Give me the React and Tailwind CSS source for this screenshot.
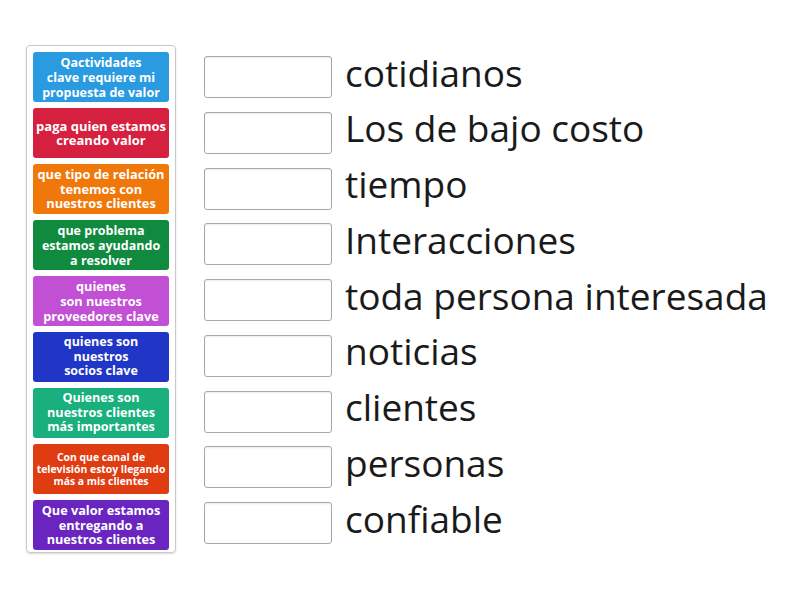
import React from 'react';

const cards = [
  { lines: ['Qactividades', 'clave requiere mi', 'propuesta de valor'], bg: 'bg-[#2a9be0]', size: 'text-[12.5px] leading-[15px]' },
  { lines: ['paga quien estamos', 'creando valor'], bg: 'bg-[#d6203f]', size: 'text-[13px] leading-[14px]' },
  { lines: ['que tipo de relación', 'tenemos con', 'nuestros clientes'], bg: 'bg-[#f0780a]', size: 'text-[12.8px] leading-[14.5px]' },
  { lines: ['que problema', 'estamos ayudando', 'a resolver'], bg: 'bg-[#0f8a3f]', size: 'text-[12.5px] leading-[15px]' },
  { lines: ['quienes', 'son nuestros', 'proveedores clave'], bg: 'bg-[#c150d5]', size: 'text-[12.7px] leading-[15px]' },
  { lines: ['quienes son', 'nuestros', 'socios clave'], bg: 'bg-[#1f36c6]', size: 'text-[12.5px] leading-[14.5px]' },
  { lines: ['Quienes son', 'nuestros clientes', 'más importantes'], bg: 'bg-[#19b07e]', size: 'text-[12.6px] leading-[14.5px]' },
  { lines: ['Con que canal de', 'televisión estoy llegando', 'más a mis clientes'], bg: 'bg-[#e03c12]', size: 'text-[10.4px] leading-[12px]' },
  { lines: ['Que valor estamos', 'entregando a', 'nuestros clientes'], bg: 'bg-[#6a25c0]', size: 'text-[12.7px] leading-[14.5px]' },
];

const words = [
  'cotidianos',
  'Los de bajo costo',
  'tiempo',
  'Interacciones',
  'toda persona interesada',
  'noticias',
  'clientes',
  'personas',
  'confiable',
];

export default function App() {
  return (
    <div className="w-[800px] h-[600px] bg-white flex items-start" style={{ fontFamily: '"Open Sans", "Liberation Sans", sans-serif' }}>
      <div className="ml-[26px] mt-[45px] w-[150px] h-[508px] border border-[#c8c8c8] rounded-[4px] shadow-[0_1px_2px_rgba(0,0,0,0.15)] px-[6px] pt-[6px] flex flex-col gap-[6px]">
        {cards.map((c, i) => (
          <div key={i} className={`h-[50px] w-[136px] rounded-[3px] ${c.bg} flex flex-col items-center justify-center text-white font-bold text-center ${c.size}`}>
            {c.lines.map((l, j) => (
              <span key={j} className="whitespace-nowrap">{l}</span>
            ))}
          </div>
        ))}
      </div>

      <div className="ml-[28px] mt-[56px] flex flex-col gap-[13.75px]">
        {words.map((w, i) => (
          <div key={i} className="flex items-center h-[42px]">
            <div className="w-[128px] h-[42px] border border-[#a8a8a8] rounded-[3px] bg-white shadow-[inset_0_1px_2px_rgba(0,0,0,0.08)]"></div>
            <span className="ml-[13px] mb-[10px] text-[37px] text-[#1a1a1a] whitespace-nowrap leading-none">{w}</span>
          </div>
        ))}
      </div>
    </div>
  );
}
